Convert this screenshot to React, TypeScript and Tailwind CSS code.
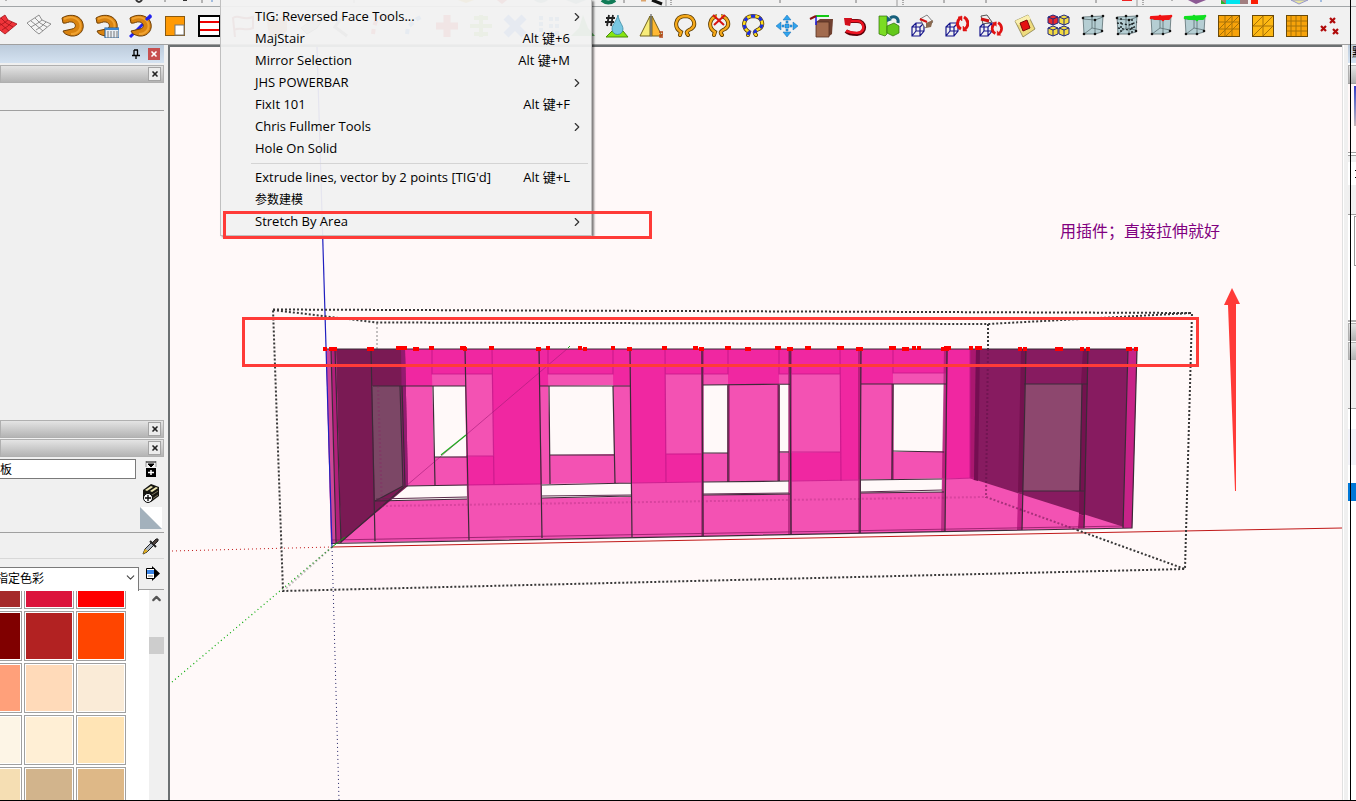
import type { ReactNode } from "react";
import { ChevronDown, ChevronRight, ChevronUp, X } from "lucide-react";

interface MenuEntry {
  label: string;
  shortcut?: string;
  submenu?: boolean;
  compact?: boolean;
}

const MENU_GROUPS: MenuEntry[][] = [
  [
    { label: "TIG: Reversed Face Tools...", submenu: true },
    { label: "MajStair", shortcut: "Alt 键+6" },
    { label: "Mirror Selection", shortcut: "Alt 键+M" },
    { label: "JHS POWERBAR", submenu: true },
    { label: "FixIt 101", shortcut: "Alt 键+F" },
    { label: "Chris Fullmer Tools", submenu: true },
    { label: "Hole On Solid" },
  ],
  [
    { label: "Extrude lines, vector by 2 points [TIG'd]", shortcut: "Alt 键+L" },
    { label: "参数建模", compact: true },
    { label: "Stretch By Area", submenu: true },
  ],
];

const SWATCHES = [
  ["Brown", "bg-[#a52a2a]"],
  ["Crimson", "bg-[#dc143c]"],
  ["Red", "bg-[#ff0000]"],
  ["Maroon", "bg-[#800000]"],
  ["Firebrick", "bg-[#b22222]"],
  ["OrangeRed", "bg-[#ff4500]"],
  ["LightSalmon", "bg-[#ffa07a]"],
  ["PeachPuff", "bg-[#ffdab9]"],
  ["AntiqueWhite", "bg-[#faebd7]"],
  ["OldLace", "bg-[#fdf5e6]"],
  ["BlanchedAlmond", "bg-[#ffefd5]"],
  ["Moccasin", "bg-[#ffe4b5]"],
  ["Wheat", "bg-[#f5deb3]"],
  ["Tan", "bg-[#d2b48c]"],
  ["BurlyWood", "bg-[#deb887]"],
];

// [x, y, width] of every selected end point along the top edge
const MARKERS = [
  [323, 347, 4], [329, 347, 8], [367, 347, 7], [396, 346, 11], [413, 347, 6], [429, 346, 5],
  [460, 346, 6], [463, 347, 4], [489, 346, 5], [536, 347, 5], [546, 346, 4], [578, 346, 4],
  [583, 347, 4], [611, 346, 4], [627, 347, 5], [662, 346, 5], [693, 346, 5], [699, 347, 5],
  [725, 346, 6], [745, 347, 6], [775, 346, 6], [787, 347, 6], [805, 346, 6], [837, 346, 7],
  [856, 347, 7], [889, 346, 7], [902, 347, 7], [912, 346, 4], [917, 346, 4], [944, 346, 7],
  [941, 347, 8], [969, 346, 4], [975, 346, 7], [1018, 347, 4], [1023, 347, 4], [1055, 347, 8],
  [1080, 347, 4], [1086, 347, 4], [1126, 347, 6], [1134, 347, 4],
];

function GridSheet({ fill, stroke }: { fill: string; stroke: string }) {
  return (
    <g stroke={stroke} strokeWidth="0.8">
      <path d="M0 9 L12 1 L15 6 L24 10 L12 20 L8 17 Z" fill={fill} />
      <path d="M4 7 L9 11 L16 17 M8 4 L13 9 L20 13 M4 13 L11 9 L15 6 M9 16 L15 12 L19 8" fill="none" />
    </g>
  );
}

function Hook() {
  return (
    <>
      <path d="M1 4 C7 0 17 0 21 7 C25 15 19 23 10 22 C6 21 3 20 2 17 L11 15 C16 14 15 9 11 8 C8 7 5 10 2 9 Z" fill="#d98310" stroke="#704006" strokeWidth="1" />
      <path d="M3 5 C9 2 16 3 19 9 C21 15 17 20 10 20" fill="none" stroke="#f0a332" strokeWidth="2" />
    </>
  );
}

function Loop({ dash }: { dash?: string }) {
  const d = "M7 21 L8 18 C1 14 1 3 12 2 C21 2 24 11 18 15 C13 17 13 19 15 21";
  return (
    <g fill="none" strokeLinecap="round">
      <path d={d} stroke="#5a3b00" strokeWidth="4" />
      <path d={d} stroke={dash ? "#ffdf20" : "#f5a81a"} strokeWidth="2.4" />
      {dash && <path d={d} stroke="#1c2fe0" strokeWidth="3" strokeDasharray={dash} strokeLinecap="butt" />}
    </g>
  );
}

function WireCube() {
  return <path d="M1 13 H9 V22 H1 Z M1 13 L5 9 H13 L9 13 M13 9 V17 L9 22 M5 9 V17 H13 M5 17 L1 22" fill="none" stroke="#16168c" strokeWidth="1.2" />;
}

function SpinArrows() {
  return (
    <g fill="none" stroke="#e01212" strokeWidth="3">
      <path d="M15 4 C11 8 12 13 16 15 M19 3 C24 6 24 12 20 15" />
      <path d="M13 3 L17 2 L17 7 Z M22 17 L18 17 L18 12 Z" fill="#e01212" strokeWidth="0.5" />
    </g>
  );
}

function MeshBox({ top, dense }: { top?: string; dense?: boolean }) {
  return (
    <>
      <path d="M2 3 L22 2 L21 18 L14 20 L3 20 Z" fill="#b5ced3" />
      <path d="M2 3 L22 2 L21 18 L14 20 L3 20 Z M2 5 L14 6 L22 3 M14 6 V20 M11 3 V14 L3 20 M11 14 L21 16" fill="none" stroke="#5c6e72" strokeWidth="0.8" />
      {dense && <path d="M6 4 V20 M17 5 V19 M2 9 L14 11 L22 8 M3 14 L14 16 L21 12" fill="none" stroke="#182022" strokeWidth="1.4" strokeDasharray="2 2" />}
      {top && <path d="M2 3 L6 5 H20 L22 2 Z" fill={top} stroke={top} strokeWidth="2" strokeLinejoin="round" />}
      {[[2, 4], [22, 2], [14, 6], [3, 20], [14, 20], [21, 17], [11, 2]].map(([x, y]) => (
        <circle key={`${x}-${y}`} cx={x} cy={y} r="1.3" fill={top && y < 7 ? top : "#111"} />
      ))}
    </>
  );
}

function MiniCube({ x, y, fill }: { x: number; y: number; fill: string }) {
  return (
    <g transform={`translate(${x} ${y})`} stroke="#232a80" strokeWidth="1" strokeLinejoin="round">
      <path d="M5 0 L10 2 V8 L5 10 L0 8 V2 Z" fill={fill} />
      <path d="M0 2 L5 4 L10 2 M5 4 V10" fill="none" />
    </g>
  );
}

function OrangeTile({ lines, fill = "#f7a30a" }: { lines: string; fill?: string }) {
  return (
    <>
      <rect x="1.5" y="1.5" width="21" height="21" fill={fill} stroke="#6b4a08" />
      <path d={lines} fill="none" stroke="#a87208" strokeWidth="1" />
    </>
  );
}

const TOOLS: [string, ReactNode][] = [
  ["Red sandbox", <GridSheet fill="#f0343a" stroke="#a3151b" />],
  ["Wire sandbox", <GridSheet fill="#f4f4f4" stroke="#777" />],
  ["Bend", <Hook />],
  [
    "Bend table",
    <>
      <Hook />
      <rect x="10" y="14" width="14" height="10" fill="#e8eef4" stroke="#175a9e" />
      <path d="M10 15 H24" stroke="#3b85d0" strokeWidth="2" />
      <path d="M13 17 V24 M16 17 V24 M19 17 V24 M22 17 V24" stroke="#777" />
    </>,
  ],
  [
    "Bend along line",
    <>
      <path d="M1 23 L22 2" stroke="#2222ee" strokeWidth="3" />
      <Hook />
      <path d="M17 6 L22 1" stroke="#2222ee" strokeWidth="3" />
    </>,
  ],
  [
    "Corner",
    <>
      <rect x="2.5" y="2.5" width="19" height="19" fill="#ff9a05" stroke="#8a5a10" />
      <rect x="12" y="11" width="9" height="10" fill="#fff" stroke="#777" />
    </>,
  ],
  [
    "Shelves",
    <>
      <rect x="2" y="2" width="21" height="20" fill="#fff" stroke="#000" strokeWidth="2" />
      <path d="M3 8 H22 M3 16 H22" stroke="#e00" strokeWidth="2" />
    </>,
  ],
  ["Flag", <path d="M4 23 L2 4 C8 0 12 7 22 3 V14 C14 18 10 12 3 16" fill="none" stroke="#a33" strokeWidth="2" />],
  ["Box", <path d="M2 8 L8 3 H22 V17 L16 22 H4 Z" fill="#c98c5c" />],
  ["Roll", <path d="M2 14 L14 5 L22 8 L18 14 L8 20 Z" fill="#bbb" stroke="#777" />],
  ["Profile", <path d="M10 1 L2 13 L14 22" fill="none" stroke="#888" strokeWidth="3" />],
  ["Red nodes", <path d="M6 20 L7 13 L10 4 L22 2" fill="none" stroke="#e33" strokeWidth="4" strokeDasharray="5 4" />],
  ["Blue nodes", <path d="M6 20 L7 13 L16 5 L22 2" fill="none" stroke="#38e" strokeWidth="4" strokeDasharray="5 4" />],
  ["Red cross", <path d="M12 1 V23 M1 12 H23" stroke="#e22" strokeWidth="7" />],
  ["Green cross", <path d="M5 4 H19 M1 12 H23 M5 20 H19 M12 1 V23" stroke="#8c3" strokeWidth="4" />],
  ["Blue cross", <path d="M3 3 L21 21 M21 3 L3 21" stroke="#37e" strokeWidth="7" />],
  ["Points", <path d="M4 2 V22 M12 5 H22 M12 12 H22 M12 19 H22" stroke="#59d" strokeWidth="4" strokeDasharray="4 2" />],
  ["Drop", <path d="M0 22 L8 14 L12 1 L17 14 L24 22 Z" fill="#6b6" />],
  [
    "Numbered drop",
    <>
      <path d="M1 23 L7 17 H18 L23 23 Z" fill="#86e611" stroke="#4a8a07" />
      <path d="M13 1 C14 8 18 11 18 15 A5.5 5.5 0 0 1 7 15 C7 11 11 8 13 1 Z" fill="#78c8e2" stroke="#2b7f99" strokeWidth="0.7" />
      <path d="M4 1 L2 12 M8 1 L6 12 M1 4 H10 M0 8 H9" stroke="#222" strokeWidth="1.8" />
    </>,
  ],
  [
    "Mirror",
    <>
      <path d="M11 2 V22 H1 Z" fill="#f8ec7a" stroke="#71621d" />
      <path d="M13 2 V22 H23 Z" fill="#ffb833" stroke="#71621d" />
      <path d="M12 0 V23" stroke="#444" strokeWidth="1" />
      <path d="M20 18 H24 V21 H21 V23 H25" fill="none" stroke="#b5481a" strokeWidth="1.5" />
    </>,
  ],
  ["Weld", <Loop />],
  ["Unweld", <><Loop /><path d="M10 0 H14 V4 H10 Z" fill="#f1f1f1" /><path d="M6 1 L17 11 M18 1 L7 11" stroke="#d81414" strokeWidth="2" /></>],
  ["Split curve", <Loop dash="4 4" />],
  [
    "Move",
    <g fill="#2fa4ee" stroke="#1a6db0" strokeWidth="0.5">
      <path d="M12 1 L16 6 H8 Z M12 23 L16 18 H8 Z M1 12 L6 8 V16 Z M23 12 L18 8 V16 Z" />
      <path d="M11 7 H13 V9 H11 Z M11 15 H13 V17 H11 Z M7 11 H9 V13 H7 Z M15 11 H17 V13 H15 Z M10 10 H14 V14 H10 Z" />
    </g>,
  ],
  [
    "Place component",
    <>
      <path d="M7 8 L11 5 H24 L23 20 L19 23 H7 Z" fill="#704131" />
      <path d="M7 8 H20 V23 H7 Z" fill="#a26b4e" stroke="#553022" strokeWidth="0.8" />
      <path d="M7 2 H20" stroke="#12c912" strokeWidth="2" />
      <path d="M7 2 V11" stroke="#1a1ae0" strokeWidth="1.5" />
      <path d="M7 2 L1 5" stroke="#8c1010" strokeWidth="2" />
    </>,
  ],
  [
    "Rotate back",
    <>
      <path d="M6 7 H14 C23 7 24 19 14 20 C9 20 5 19 3 17" fill="none" stroke="#5c0008" strokeWidth="4" />
      <path d="M6 7 H14 C22 7 23 19 14 19 C9 19 6 18 3 17" fill="none" stroke="#ee1422" strokeWidth="2.6" />
      <path d="M1 4 H9 L7 12 L2 11 Z" fill="#d20f1c" />
    </>,
  ],
  [
    "Stretch shape",
    <>
      <path d="M2 2 H10 V20 L8 22 L2 20 Z" fill="#7bdc23" stroke="#2f6f0b" strokeWidth="0.7" />
      <path d="M10 12 L17 9 L22 12 V19 L16 22 L10 19 Z" fill="#63c81b" stroke="#2f6f0b" strokeWidth="0.7" />
      <path d="M13 4 C18 1 22 4 21 9" fill="none" stroke="#17607c" strokeWidth="3" />
      <path d="M10 2 V8 L15 6 Z" fill="#17607c" />
    </>,
  ],
  ["Project face", <><WireCube /><path d="M9 5 L16 1 L22 8 L14 14 Z" fill="#f4f4f4" stroke="#555" strokeWidth="0.7" /><path d="M15 9 L22 6 L20 13 L15 14 Z" fill="#8b6a50" /><path d="M9 5 L16 8" stroke="#d01212" strokeWidth="2" /></>],
  ["Rotate component", <><WireCube /><SpinArrows /></>],
  ["Rotate object", <><WireCube /><path d="M2 2 L8 1 L13 8 L4 10 Z" fill="#eee" stroke="#555" /><path d="M2 5 L10 7" stroke="#d01212" strokeWidth="3" /><g transform="translate(2 6) scale(.9)"><SpinArrows /></g></>],
  [
    "Centre block",
    <>
      <path d="M2 7 L15 1 L22 15 L10 23 Z" fill="#eedc7f" stroke="#77703c" strokeWidth="0.7" />
      <path d="M2 7 L15 1 L18 5 L5 11 Z" fill="#faf0b0" />
      <path d="M7 9 L14 6 L17 14 L10 17 Z" fill="#e51111" stroke="#7c0909" />
    </>,
  ],
  ["Components", <><MiniCube x={1} y={1} fill="#e8282c" /><MiniCube x={12} y={1} fill="#f4dc43" /><MiniCube x={1} y={12} fill="#f4dc43" /><MiniCube x={12} y={12} fill="#f4dc43" /></>],
  ["Box mesh", <MeshBox />],
  ["Dense mesh", <MeshBox dense />],
  ["Red edge mesh", <MeshBox top="#f01414" />],
  ["Green edge mesh", <MeshBox top="#10e020" />],
  ["Diagonal tile", <OrangeTile lines="M8 2 V22 M15 2 V22 M2 8 H22 M2 15 H22 M2 15 L15 2 M2 22 L22 2 M9 22 L22 9" />],
  ["Cross tile", <OrangeTile fill="#fdb813" lines="M12 2 V22 M2 12 H22 M2 12 L12 2 M12 22 L22 12 M2 22 L12 12 L22 2" />],
  ["Grid tile", <OrangeTile lines="M6 2 V22 M11 2 V22 M16 2 V22 M2 7 H22 M2 12 H22 M2 17 H22" />],
  ["Delete points", <path d="M11 4 L16 9 M16 4 L11 9 M2 12 L7 17 M7 12 L2 17 M14 15 L19 20 M19 15 L14 20" stroke="#b00a0a" strokeWidth="2.2" />],
];

function ToolbarRemnant() {
  return (
    <svg className="h-full w-full" viewBox="0 0 1356 6" preserveAspectRatio="xMinYMin slice" aria-hidden="true">
      <path d="M6 0 V1 M165 0 V2 M202 0 V3 M354 0 V3 M624 0 V3 M780 0 V3 M856 0 V3 M944 0 V3 M986 0 V3 M1096 0 V3 M1172 0 V1" stroke="#777" />
      <path d="M666 0 V6 M897 0 V6 M1137 0 V6" stroke="#999" />
      <path d="M671 0 V6 M903 0 V6 M1143 0 V6" stroke="#aaa" strokeWidth="2" strokeDasharray="1 1" />
      <path d="M136 0 Q139 4 142 0 M183 0 H187" fill="none" stroke="#333" strokeWidth="2" />
      <path d="M602 0 Q608 5 615 0" fill="none" stroke="#117c58" strokeWidth="4" />
      <path d="M641 0 H646" stroke="#dba36b" strokeWidth="3" />
      <path d="M652 0 L662 4" stroke="#111" strokeWidth="3" />
      <path d="M1122 0 H1132" stroke="#e22" strokeWidth="2" />
      <path d="M1188 0 L1196 4 L1206 0 Z" fill="#8c5a94" />
      <path d="M1221 0 H1248 V4 H1221 Z" fill="#a27f80" />
      <path d="M1221 0 L1226 4 H1221 Z" fill="#2ab52a" />
      <path d="M1226 0 H1240 V4 H1226 Z" fill="#00e5ee" />
      <path d="M1251 0 H1258 V4 H1251 Z" fill="#fb1e05" />
      <path d="M1291 0 L1299 4 L1308 0 Z" fill="#e9e6a0" stroke="#9898ce" />
      <path d="M212 0 V2 M1321 0 V2" stroke="#58c" />
      <path d="M458 0 L466 3 L474 0 Z" fill="#dfad1f" />
      <path d="M497 0 L502 4 L507 0 Z" fill="#d22" />
      <path d="M534 0 Q541 6 548 0 M566 0 L576 4 L586 0 Z" fill="#7aa6a0" />
    </svg>
  );
}

function Toolbars() {
  return (
    <header className="shrink-0 bg-[#f1f1f1]">
      <div className="h-[7px] overflow-hidden border-b border-[#a2a6a8]">
        <ToolbarRemnant />
      </div>
      <div className="-ml-3 flex h-[38px] items-center overflow-hidden border-b border-[#a0a0a0]">
        {TOOLS.map(([name, icon]) => (
          <button key={name} type="button" aria-label={name} className="flex h-8 w-[34px] shrink-0 items-center justify-center">
            <svg width="24" height="24" viewBox="0 0 24 24">{icon}</svg>
          </button>
        ))}
      </div>
    </header>
  );
}

function TrayBar({ label }: { label: string }) {
  return (
    <div className="flex h-[18px] shrink-0 items-center justify-end border border-[#b0b0b0] bg-linear-to-b from-[#e4e4e4] to-[#b4b4b4] pr-0.5">
      <button type="button" aria-label={label} className="flex h-[14px] w-[13px] items-center justify-center border border-[#a4a4a4] bg-[#ececec]">
        <X size={8} strokeWidth={5} className="text-[#222]" />
      </button>
    </div>
  );
}

function MaterialsTray() {
  return (
    <aside className="flex w-[168px] shrink-0 flex-col overflow-hidden bg-[#f0f0f0] pr-1">
      <div className="flex h-[18px] shrink-0 items-center justify-end gap-2 bg-linear-to-b from-[#bccbdb] to-[#d4e2f1] pr-1">
        <button type="button" aria-label="Pin tray">
          <svg width="8" height="10" viewBox="0 0 8 10">
            <path d="M2 1 H6 M2 1 V6 M5.5 1 V6 M0 6.5 H8 M4 7 V10" fill="none" stroke="#000" strokeWidth="1.3" />
          </svg>
        </button>
        <button type="button" aria-label="Close tray" className="flex h-3 w-3 items-center justify-center bg-[#c75050]">
          <X size={8} strokeWidth={5} className="text-white" />
        </button>
      </div>
      <div className="mt-0.5"><TrayBar label="Close info" /></div>
      <div className="mt-[27px] h-px shrink-0 bg-[#a0a0a0]" />
      <div className="mt-auto" />

      <div className="flex shrink-0 flex-col gap-px">
        <TrayBar label="Close components" />
        <TrayBar label="Close materials" />
      </div>
      <div className="flex h-[76px] shrink-0 justify-between border-b border-[#a0a0a0] pt-0.5">
        <input
          aria-label="Material name"
          defaultValue="板"
          className="h-5 w-[136px] border border-l-0 border-[#7a7a7a] bg-white text-xs text-black"
        />
        <div className="flex w-[26px] flex-col items-center gap-1.5 pt-0.5">
          <button type="button" aria-label="Show secondary pane">
            <svg width="12" height="17" viewBox="0 0 12 17" className="block">
              <path d="M1 0 V6 M11 0 V6" stroke="#999" />
              <path d="M1 1 H11 M3 3 H9 L6 6 Z" fill="#000" stroke="#000" strokeWidth="1" />
              <path d="M1 7 H11 V16 H1 Z" fill="#000" />
              <path d="M6 9 V14 M3 11.5 H9" stroke="#fff" strokeWidth="1.5" />
            </svg>
          </button>
          <button type="button" aria-label="Create material">
            <svg width="18" height="19" viewBox="0 0 18 19" className="block">
              <path d="M1 6 L9 0 L17 3 V12 L9 18 L1 14 Z" fill="#151510" />
              <path d="M3 6 L9 2 L11 3 L5 7 Z M8 7 L14 3 L16 4 L10 8 Z" fill="#efe7b2" />
              <path d="M10 11 L16 7 M10 15 L16 11" stroke="#7b735c" strokeWidth="1" />
              <circle cx="6" cy="14" r="4.5" fill="#fff" stroke="#000" />
              <path d="M6 11 V17 M3 14 H9" stroke="#000" strokeWidth="1.3" />
            </svg>
          </button>
          <button type="button" aria-label="Default material" className="-mt-0.5">
            <svg width="22" height="22" viewBox="0 0 22 22" className="block">
              <path d="M0 0 H22 V22 Z" fill="#fff" />
              <path d="M0 0 L22 22 H0 Z" fill="#a3b1bc" />
            </svg>
          </button>
        </div>
      </div>
      <div className="flex h-[26px] shrink-0 items-center justify-end border-b border-[#d8d8d8] pr-1">
        <button type="button" aria-label="Sample paint">
          <svg width="18" height="18" viewBox="0 0 18 18">
            <path d="M1 17 L3 12 L10 5 L12 8 L5 15 Z" fill="#aeb6c0" stroke="#222" strokeWidth="1" />
            <path d="M1 17 L3 12 L6 14 Z" fill="#e4b01c" />
            <path d="M8 4 L14 10" stroke="#222" strokeWidth="2" />
            <path d="M10 6 L14 2 Q17 1 16 4 L12 8 Z" fill="#4c403c" stroke="#222" />
          </svg>
        </button>
      </div>
      <div className="flex h-[31px] shrink-0 items-end justify-between border-b border-[#a0a0a0]">
        <div className="relative -ml-1 h-6 w-[143px]">
          <select
            aria-label="Material library"
            className="h-full w-full appearance-none border-t border-r border-[#7a7a7a] bg-white text-xs text-black"
          >
            <option>指定色彩</option>
          </select>
          <ChevronDown size={13} strokeWidth={2} className="pointer-events-none absolute top-1.5 right-0.5 text-[#444]" />
        </div>
        <button type="button" aria-label="Details" className="mr-1 mb-2">
          <svg width="14" height="15" viewBox="0 0 14 15" className="block">
            <path d="M6 0 L14 7.5 L6 15 Z" fill="#000" />
            <path d="M0.5 2.5 H8.5 V12.5 H0.5 Z" fill="#fff" stroke="#000" />
            <path d="M1 4 H8 V8 H1 Z" fill="#3b86e8" />
            <path d="M2 10 H7" stroke="#777" />
          </svg>
        </button>
      </div>
      <div className="flex h-[210px] shrink-0 overflow-hidden bg-white">
        <div className="-mt-[31px] -ml-7 grid flex-1 auto-rows-[50px] grid-cols-[50px_50px_50px] gap-0.5">
          {SWATCHES.map(([name, color]) => (
            <button key={name} type="button" aria-label={name} className="border border-[#a0a0a0] p-px">
              <span className={`block h-full w-full ${color}`} />
            </button>
          ))}
        </div>
        <div className="flex w-[15px] shrink-0 flex-col items-center bg-[#f0f0f0]">
          <ChevronUp size={13} strokeWidth={4} className="mt-0.5 text-[#555]" />
          <div className="mt-8 h-[17px] w-full bg-[#cdcdcd]" />
        </div>
      </div>
    </aside>
  );
}

function ModelView() {
  return (
    <svg className="h-full w-full" viewBox="170 47 1172 753" preserveAspectRatio="xMinYMin slice" role="img" aria-label="Model">
      {/* back wall with its windows, then the front wall over it */}
      <g fill="#ef199b" fillOpacity=".75" fillRule="evenodd">
        <path d="M404 349 H977 L974 478 L406 486 Z M432 374 H492 L494 456 L434 457 Z M548 374 H613 L614 454 L550 455 Z M665 374 H728 L728 453 L666 454 Z M779 374 H840 L840 452 L780 453 Z M893 373 H946 L946 451 L893 452 Z" />
        <path d="M326 349 H1137 L1132 528 L331 543 Z M372 386 L465 386 L467 499 L375 501 Z M540 386 L630 385 L631 497 L542 498 Z M703 385 L789 384 L789 494 L703 495 Z M861 384 L944 384 L942 492 L861 493 Z" />
      </g>

      {/* left side wall */}
      <path d="M336 349 H405 L408 486 L341 542 Z" fill="#7a1a54" />
      <path d="M372 386 H401 L403 486 L375 501 Z" fill="#7c4766" />
      <path d="M401 349 H405 L408 486 L403 486 Z" fill="#941a70" />
      <path d="M326 349 H331 L335 543 H331 Z" fill="#cc4796" />
      <path d="M331 349 H336 L341 543 H336 Z" fill="#b21f7b" />

      {/* right side wall */}
      <path d="M970 349 H1128 L1124 527 L970 478 Z" fill="#871b60" />
      <path d="M970 349 H976 L974 480 L970 478 Z" fill="#aa176f" />
      <path d="M976 349 H980 L978 481 L974 480 Z" fill="#740e51" />
      <path d="M1021 349 H1026 L1023 492 L1018 492 Z M1083 349 H1088 L1085 516 L1079 514 L1081 384 Z" fill="#74124f" />
      <path d="M1018 494 H1023 L1022 530 H1017 Z" fill="#c01f85" />
      <path d="M1079 514 L1085 516 L1084 528 H1078 Z" fill="#a9156f" />
      <path d="M1025 384 H1082 L1079 491 H1023 Z" fill="#8d476e" />
      <path d="M1128 349 H1137 L1132 528 H1123 Z" fill="#c72388" />

      {/* reveals of the front openings */}
      <g fill="#9a1868" fillOpacity=".6">
        <path d="M701 349 H704 V536 H701 Z M788 349 H792 V534 H788 Z M858 349 H861 V533 H858 Z M944 349 H948 L945 531 H941 Z" />
        <path d="M727 385 H730 V482 H727 Z M777 385 H780 V481 H777 Z M891 384 H894 V480 H891 Z" />
      </g>

      {/* edges seen through a wall */}
      <g fill="none" stroke="#c3188a" strokeWidth="1.2" strokeOpacity=".8">
        <path d="M432 349 V374 H492 M492 349 L494 484 M466 456 H494 M548 349 V374 H613 V349 M665 349 L666 482 M665 374 H728 V349 M666 454 H702 M779 349 V374 H840 M840 349 L841 481 M780 452 H840 M893 349 V373 H946 M970 349 V478" />
        <path d="M468 485 L541 484 M632 483 L702 482 M791 481 L859 480 M945 479 L974 478" />
        <path d="M406 486 L567 349" stroke="#a31d78" strokeWidth="1" strokeOpacity=".6" />
        <path d="M331 540 L1124 526" stroke="#8d1a64" strokeWidth="1" />
      </g>

      {/* visible edges */}
      <g fill="none" stroke="#3c2a38" strokeWidth="1.2">
        <path d="M324 349 H1137 L1132 528 L331 543.5" />
        <path d="M331 349 L336 543 M335 349 L341 543 M371 349 L375 541 M373 386 H466 M404 487 L341 542 M400 386 L403 486 M402 386 L405 487 M375 501 L403 486" />
        <path d="M433 386 L435 485 M434 457 H467 M406 486 L467 485 M375 501 L467 499 M465 349 L469 540" />
        <path d="M539 349 L542 538 M540 386 H631 M549 386 L550 484 M550 455 H614 M613 386 L615 483 M542 485 L631 483 M542 498 L631 496 M630 349 L632 537" />
        <path d="M702 349 L703 536 M703 385 L790 384 M728 385 V482 M703 453 H728 M703 482 L789 481 M703 495 L790 494 M779 385 V481 M779 452 H789 M790 349 L791 534" />
        <path d="M861 349 L860 533 M861 384 L946 384 M893 384 L892 480 M893 451 L944 452 M861 480 L942 479 M861 493 L944 492 M947 349 L945 531" />
        <path d="M1026 349 L1022 530 M1082 384 L1080 491 M1024 384 H1088 M1023 491 H1084 M1088 349 L1084 528 M1128 349 L1123 528" />
      </g>

      {/* lower reveals of the floor openings */}
      <path d="M376 499 L467 497 M542 496 L631 495 M703 494 L789 493 M861 492 L942 490" fill="none" stroke="#5a2a4a" />

      {/* axes */}
      <g fill="none">
        <path d="M317 47 L332 547" stroke="#2020c0" strokeWidth="1.2" />
        <path d="M332 547 L1342 528" stroke="#c01818" />
        <path d="M332 547 L345 537" stroke="#10a010" />
        <path d="M441 455 L466 435" stroke="#1fae1f" strokeWidth="1.3" />
        <path d="M172 551 L332 547" stroke="#c01818" strokeDasharray="1 3" />
        <path d="M172 682 L332 547" stroke="#00a800" strokeWidth="1.2" strokeDasharray="1 3" />
        <path d="M332 547 L339 800" stroke="#222266" strokeDasharray="1 3" />
        <path d="M568 348 L570 346" stroke="#1fae1f" />
      </g>

      {/* bounding box */}
      <g fill="none" stroke="#383838" strokeWidth="2" strokeDasharray="2 2">
        <path d="M273 309.5 L1192 313 L1185 569 L283 591 Z" />
        <path d="M273 310 L377 322.5 L988 324 L1192 313" />
        <path d="M988 324 L988 349 M1077 530 L1185 569" />
        <path d="M377 323 V349 M283 591 L332 547" strokeOpacity=".3" />
        <path d="M378 386 L382 506 L986 497" stroke="#8c1865" strokeOpacity=".25" />
        <path d="M988 349 L986 497 L1077 530" stroke="#5c1044" strokeOpacity=".5" />
      </g>

      <g fill="#ff0000">
        {MARKERS.map(([x, y, width]) => (
          <rect key={x} x={x} y={y} width={width} height="4" />
        ))}
      </g>

      {/* markup */}
      <rect x="243.5" y="318.5" width="954" height="47" fill="none" stroke="#ff3b38" strokeWidth="3" />
      <path d="M1232 288 L1240 304 H1236 V491 H1235 L1228 305 H1224 Z" fill="#ff3b38" />
    </svg>
  );
}

function OutlinerSliver() {
  return (
    <aside className="flex w-3 shrink-0 flex-col overflow-hidden border-l-4 border-[#f0f0f0] bg-white" aria-label="Outliner tray">
      <div className="h-[18px] shrink-0 overflow-hidden bg-linear-to-b from-[#bccbdb] to-[#d4e2f1] pl-1 text-xs leading-4 text-black">默</div>
      <div className="mt-0.5 h-[18px] shrink-0 border border-r-0 border-[#b0b0b0] bg-linear-to-b from-[#e4e4e4] to-[#b4b4b4]" />
      <div className="flex h-[70px] shrink-0 justify-end border-y border-[#a0a0a0] bg-[#fff8f8] pt-0.5">
        <div className="h-10 w-0.5 bg-linear-to-b from-[#3535c5] to-[#c8b8b8]" />
      </div>
      <div className="mt-0.5 h-[7px] shrink-0 border-t border-[#a0a0a0] bg-[#f0f0f0]" />
      <div className="flex h-[23px] shrink-0 flex-col items-end justify-center gap-1.5">
        <span className="h-px w-px bg-black" />
        <span className="h-px w-px bg-black" />
      </div>
      <div className="h-[30px] shrink-0 border-b border-[#a0a0a0] bg-[#f0f0f0]" />
      <div className="mt-px ml-1.5 h-[50px] shrink-0 border border-r-0 border-[#999]" />
      <div className="mt-[54px] h-0.5 shrink-0 bg-[#b0b0b0]" />
      <div className="mt-px h-[18px] shrink-0 border border-r-0 border-[#b0b0b0] bg-linear-to-b from-[#e4e4e4] to-[#b4b4b4]" />
      <div className="mt-px h-[18px] shrink-0 border border-r-0 border-[#b0b0b0] bg-linear-to-b from-[#e4e4e4] to-[#b4b4b4]" />
      <div className="h-[49px] shrink-0 border-b border-[#a0a0a0] bg-[#f0f0f0]" />
      <div className="mt-5 h-9 shrink-0 bg-[#f2f2f8]" />
      <div className="mt-[18px] h-[18px] shrink-0 bg-[#0078d7]" />
    </aside>
  );
}

function PluginMenu() {
  return (
    <nav className="absolute top-0 left-[220px] z-10 w-[372px] border-r border-b border-l border-[#c0c0c0] bg-[#f1f1f1]/94 pt-1.5 pb-0.5 text-[13px] text-black shadow-[2px_1px_2px_rgba(0,0,0,0.5)]">
      {MENU_GROUPS.map((group, i) => (
        <ul key={i} className={i > 0 ? "mt-[3px] ml-[30px] mr-[3px] border-t border-[#d4d4d4] pt-[3px]" : "ml-[30px] mr-[3px]"}>
          {group.map(({ label, shortcut, submenu, compact }) => (
            <li key={label}>
              <button type="button" className="flex h-[22px] w-full items-center justify-between pr-1 pl-1 text-left whitespace-nowrap">
                <span className={compact ? "text-xs" : undefined}>{label}</span>
                {shortcut && <span className="pr-3.5">{shortcut}</span>}
                {submenu && <ChevronRight size={14} strokeWidth={2} className="text-[#333]" />}
              </button>
            </li>
          ))}
        </ul>
      ))}
    </nav>
  );
}

export default function App() {
  return (
    <div className="relative flex h-screen flex-col overflow-hidden border-b border-black bg-[#f0f0f0] font-['Open_Sans','Noto_Sans_CJK_SC',sans-serif]">
      <Toolbars />
      <div className="flex min-h-0 flex-1">
        <MaterialsTray />
        <main className="min-w-0 flex-1 overflow-hidden border-t-2 border-l-2 border-[#6c7072] bg-[#fff9f9]">
          <ModelView />
        </main>
        <div className="w-0.5 shrink-0 border-l border-[#e0e0e0] bg-white" />
        <OutlinerSliver />
      </div>
      <PluginMenu />
      <div className="pointer-events-none absolute top-[211px] left-[223px] z-20 h-7 w-[429px] border-3 border-[#ff3b38]" />
      <p className="absolute top-[219px] left-[1060px] text-base text-[#800080]">用插件；直接拉伸就好</p>
      <div className="pointer-events-none absolute inset-y-0 right-[5px] w-px bg-black" />
    </div>
  );
}
